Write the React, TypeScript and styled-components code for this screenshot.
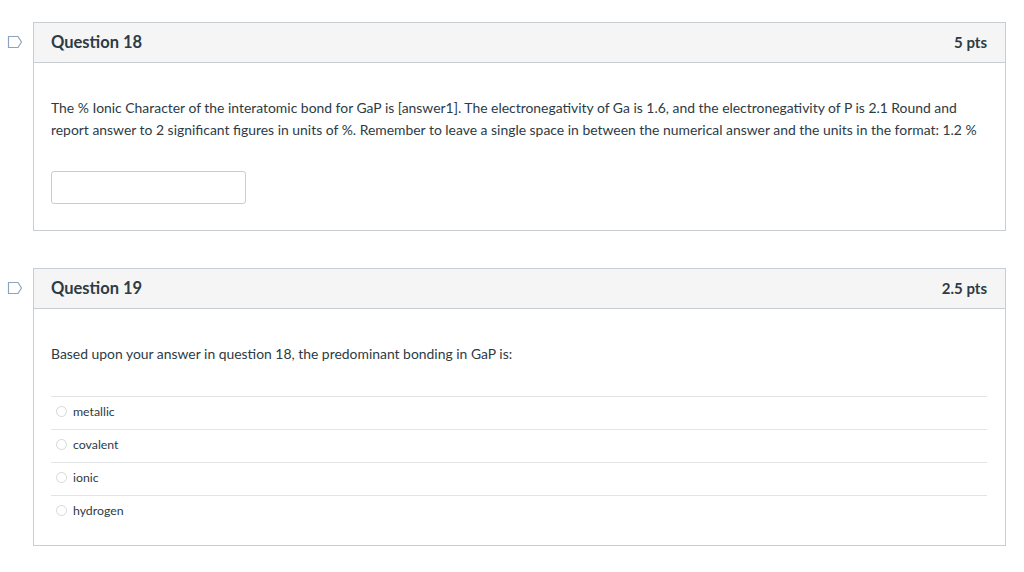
import styled, { createGlobalStyle } from "styled-components";

const GlobalStyle = createGlobalStyle`
  body {
    margin: 0;
    background: #fff;
    font-family: Lato, "Open Sans", "Liberation Sans", sans-serif;
    color: #2d3b45;
  }
`;

const Page = styled.div`
  display: flex;
  flex-direction: column;
  gap: 37px;
  padding: 22px 18px 0 0;
`;

const QuestionRow = styled.div`
  display: flex;
  align-items: flex-start;
`;

const FlagSlot = styled.div`
  width: 33px;
  flex-shrink: 0;
  display: flex;
  justify-content: center;
  padding-top: 13px;
  padding-right: 3px;
  box-sizing: border-box;
`;

const Card = styled.div`
  flex: 1;
  border: 1px solid #c7cdd1;
`;

const Header = styled.div`
  display: flex;
  justify-content: space-between;
  align-items: center;
  height: 39px;
  padding: 0 18px 0 17px;
  background: #f5f5f5;
  border-bottom: 1px solid #c7cdd1;
`;

const Title = styled.span`
  font-size: 16.5px;
  font-weight: 700;
  margin-top: -2px;
`;

const Points = styled.span`
  font-size: 15px;
  font-weight: 700;
  color: #2d3b45;
  margin-top: -1px;
`;

const Body = styled.div<{ $bottom: number }>`
  padding: 34px 18px ${(p) => p.$bottom}px 17px;
`;

const Prompt = styled.p`
  margin: 0;
  font-size: 13.92px;
  line-height: 22px;
`;

const AnswerInput = styled.input`
  display: block;
  margin-top: 30px;
  width: 195px;
  height: 33px;
  box-sizing: border-box;
  border: 1px solid #c7cdd1;
  border-radius: 3px;
  background: #fff;
`;

const OptionList = styled.div`
  margin-top: 31px;
`;

const Option = styled.label`
  display: flex;
  align-items: center;
  gap: 6px;
  height: 33px;
  padding-left: 5px;
  padding-bottom: 3px;
  box-sizing: border-box;
  border-top: 1px solid #e2e5e7;
  font-size: 12.3px;
  color: #2d3b45;
`;

const Radio = styled.span`
  width: 9px;
  height: 9px;
  border-radius: 50%;
  border: 1px solid #d5d9dc;
  background: #fff;
`;

const Flag = () => (
  <svg width="16" height="14" viewBox="0 0 16 14">
    <path
      d="M1.5 1.5 H11 L14.5 7 L11 12.5 H1.5 Z"
      fill="none"
      stroke="#8da3bd"
      strokeWidth="1.2"
      strokeLinejoin="round"
    />
  </svg>
);

const options = ["metallic", "covalent", "ionic", "hydrogen"];

const App = () => (
  <>
    <GlobalStyle />
    <Page>
      <QuestionRow>
        <FlagSlot>
          <Flag />
        </FlagSlot>
        <Card>
          <Header>
            <Title>Question 18</Title>
            <Points>5 pts</Points>
          </Header>
          <Body $bottom={26}>
            <Prompt>
              The % Ionic Character of the interatomic bond for GaP is [answer1]. The
              electronegativity of Ga is 1.6, and the electronegativity of P is 2.1 Round and
              report answer to 2 significant figures in units of %. Remember to leave a single
              space in between the numerical answer and the units in the format: 1.2 %
            </Prompt>
            <AnswerInput type="text" />
          </Body>
        </Card>
      </QuestionRow>
      <QuestionRow>
        <FlagSlot>
          <Flag />
        </FlagSlot>
        <Card>
          <Header>
            <Title>Question 19</Title>
            <Points>2.5 pts</Points>
          </Header>
          <Body $bottom={17}>
            <Prompt>
              Based upon your answer in question 18, the predominant bonding in GaP is:
            </Prompt>
            <OptionList>
              {options.map((o) => (
                <Option key={o}>
                  <Radio />
                  {o}
                </Option>
              ))}
            </OptionList>
          </Body>
        </Card>
      </QuestionRow>
    </Page>
  </>
);

export default App;
